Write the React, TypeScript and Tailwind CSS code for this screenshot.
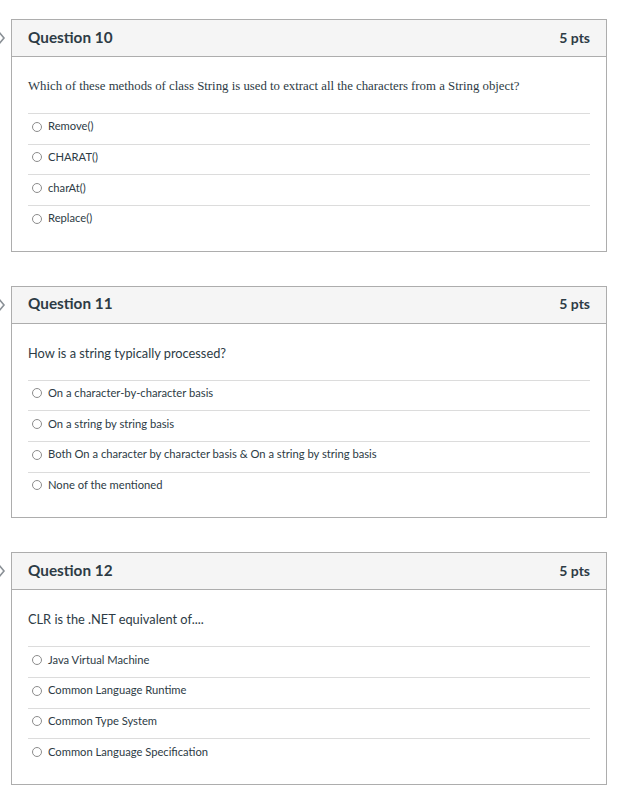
import React from "react";

type Q = {
  n: number;
  text: string;
  serif?: boolean;
  options: string[];
};

const questions: Q[] = [
  {
    n: 10,
    text: "Which of these methods of class String is used to extract all the characters from a String object?",
    serif: true,
    options: ["Remove()", "CHARAT()", "charAt()", "Replace()"],
  },
  {
    n: 11,
    text: "How is a string typically processed?",
    options: [
      "On a character-by-character basis",
      "On a string by string basis",
      "Both On a character by character basis & On a string by string basis",
      "None of the mentioned",
    ],
  },
  {
    n: 12,
    text: "CLR is the .NET equivalent of....",
    options: [
      "Java Virtual Machine",
      "Common Language Runtime",
      "Common Type System",
      "Common Language Specification",
    ],
  },
];

function Chevron() {
  return (
    <svg width="11" height="14" viewBox="0 0 11 14" className="block">
      <path d="M-1 1 L4 7 L-1 13" fill="none" stroke="#8a9096" strokeWidth="1.6" strokeLinejoin="miter" />
    </svg>
  );
}

function Card({ q }: { q: Q }) {
  return (
    <div className="flex">
      <div className="w-[11px] shrink-0 pt-[12px]">
        <Chevron />
      </div>
      <div className="flex-1 border border-[#adadad] bg-white">
        <div className="flex h-[37px] items-center justify-between border-b border-[#adadad] bg-[#f5f5f5] px-[16px] pb-[2px]">
          <div className="text-[15.3px] font-bold text-[#2d3b45]">Question {q.n}</div>
          <div className="text-[14px] font-bold text-[#2d3b45]">5 pts</div>
        </div>
        <div className="px-[16px] pb-[15px]">
          <div
            className={
              q.serif
                ? "pt-[20px] pb-[18px] text-[12.8px] leading-[18px] text-[#2d3b45] [font-family:'Liberation_Serif',serif]"
                : "pt-[20px] pb-[18px] text-[12.8px] leading-[18px] text-[#2d3b45]"
            }
          >
            {q.text}
          </div>
          {q.options.map((o) => (
            <div key={o} className="flex h-[30.67px] items-center border-t border-[#dcdcdc] pb-[4px] pl-[4px]">
              <span className="mr-[6px] inline-block h-[10px] w-[10px] rounded-full border border-[#8c8c8c] bg-white" />
              <span className="text-[11.2px] text-[#2d3b45]">{o}</span>
            </div>
          ))}
        </div>
      </div>
    </div>
  );
}

export default function App() {
  return (
    <div className="min-h-[810px] w-[627px] bg-white pt-[19px] pr-[20px] [font-family:Lato,'Liberation_Sans',sans-serif]">
      <div className="flex flex-col gap-[34px]">
        {questions.map((q) => (
          <Card key={q.n} q={q} />
        ))}
      </div>
    </div>
  );
}
